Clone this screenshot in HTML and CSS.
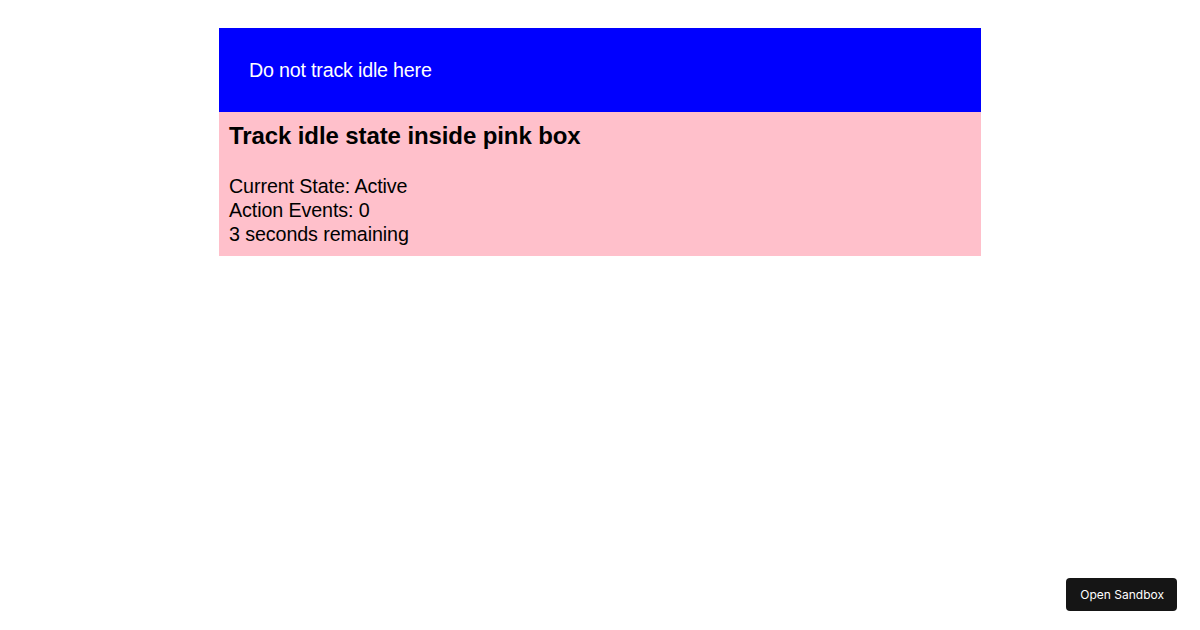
FILE: index.html
```html
<!DOCTYPE html>
<html>
<head>
    <title>Idle Tracker</title>
    <link rel="stylesheet" href="styles.css">
</head>
<body>
    <div class="app">
        <!-- Outside area: idle is not tracked here -->
        <div class="outside">Do not track idle here</div>

        <!-- Tracked area -->
        <div class="tracked">
            <h2>Track idle state inside pink box</h2>
            <div>Current State: Active</div>
            <div>Action Events: 0</div>
            <div>3 seconds remaining</div>
        </div>
    </div>

    <a class="sandbox-button" href="#">Open Sandbox</a>
</body>
</html>
```

FILE: styles.css
```css
/* Reset some default styles */
body {
    margin: 0;
    padding: 0;
    font-family: "Liberation Sans", Arial, sans-serif;
    background-color: #fff;
    color: #000;
}

.app {
    width: 762px;
    margin: 28px auto 0;
    font-size: 19.7px;
    line-height: 24px;
    letter-spacing: -0.1px;
}

/* Blue box at the top */
.outside {
    background-color: #0000ff;
    color: #fff;
    padding: 30px;
    letter-spacing: -0.2px;
}

/* Pink box with the tracker output */
.tracked {
    background-color: pink;
    padding: 10px;
}

.tracked h2 {
    margin: 0 0 24px;
    font-size: 24px;
    line-height: 28px;
    letter-spacing: -0.1px;
}

/* Floating link in the corner */
.sandbox-button {
    position: fixed;
    right: 23px;
    bottom: 19px;
    background-color: #151515;
    color: #fff;
    font-family: Inter, "Liberation Sans", sans-serif;
    font-size: 12px;
    line-height: 33px;
    padding: 0 13px 0 14px;
    border-radius: 4px;
    text-decoration: none;
}
```
